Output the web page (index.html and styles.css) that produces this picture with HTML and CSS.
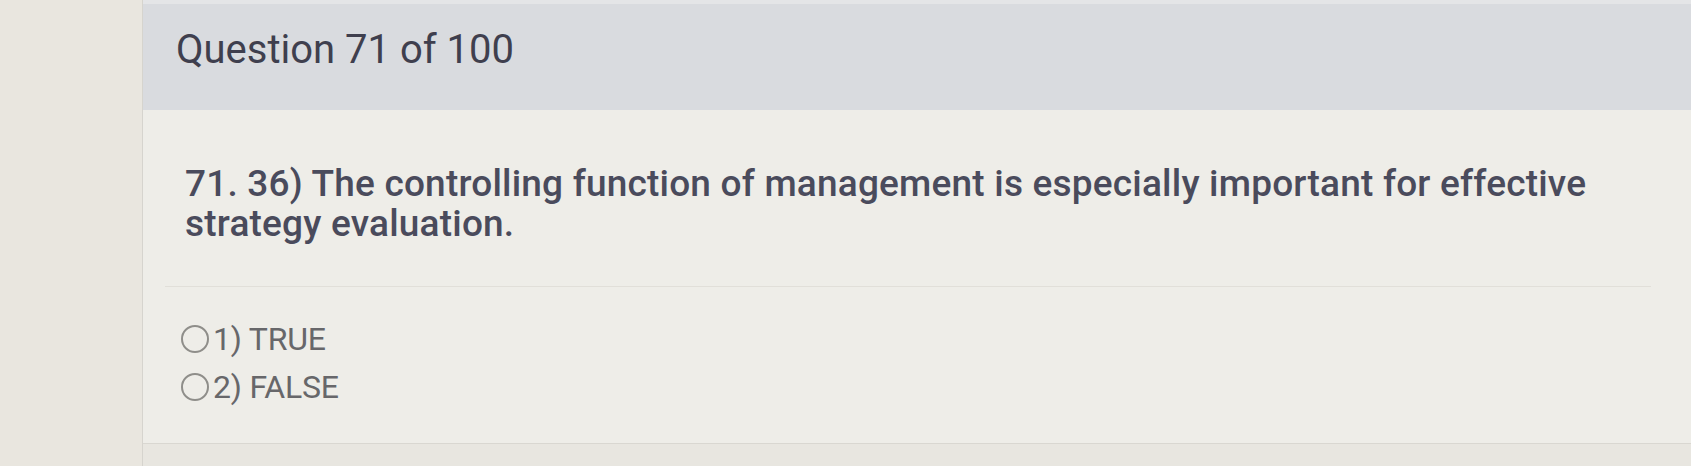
FILE: index.html
```html
<!DOCTYPE html>
<html lang="en">
<head>
<meta charset="utf-8">
<title>Question 71 of 100</title>
<link rel="stylesheet" href="styles.css">
</head>
<body>
<div class="page">
  <div class="gutter"></div>
  <main class="main">
    <header class="qhead">
      <h1 class="qtitle">Question 71 of 100</h1>
    </header>
    <section class="card">
      <p class="qtext">71. 36) The controlling function of management is especially important for effective strategy evaluation.</p>
      <hr class="divider">
      <ul class="options">
        <li class="option"><span class="radio"></span><span class="label">1) TRUE</span></li>
        <li class="option"><span class="radio"></span><span class="label">2) FALSE</span></li>
      </ul>
    </section>
  </main>
</div>
</body>
</html>
```

FILE: styles.css
```css
html, body {
  margin: 0;
  padding: 0;
}
body {
  width: 1691px;
  height: 466px;
  overflow: hidden;
  background: #e8e6e0;
  font-family: Roboto, "Liberation Sans", Arial, sans-serif;
}
.page {
  display: flex;
  height: 466px;
}
.gutter {
  width: 142px;
  flex: none;
  background: #e9e6df;
}
.main {
  flex: 1;
  display: flex;
  flex-direction: column;
  border-left: 1px solid #d6d4ce;
}
.qhead {
  height: 110px;
  box-sizing: border-box;
  padding: 22px 0 0 33px;
  background: #d9dbdf;
  border-top: 4px solid #e4e5e7;
}
.qtitle {
  margin: 0;
  font-size: 40px;
  line-height: 48px;
  font-weight: 400;
  color: #3f3f4e;
}
.card {
  height: 334px;
  box-sizing: border-box;
  background: #eeede8;
  border-bottom: 1px solid #d9d7d1;
  padding: 54px 0 0 42px;
}
.qtext {
  margin: 0;
  width: 1480px;
  font-size: 37px;
  line-height: 40px;
  font-weight: 500;
  letter-spacing: 0.2px;
  color: #4a4b5c;
}
.divider {
  margin: 42px 40px 0 -20px;
  border: 0;
  height: 1px;
  background: #e1dfd9;
}
.options {
  list-style: none;
  margin: 28px 0 0 -4px;
  padding: 0;
}
.option {
  display: flex;
  align-items: center;
  height: 48px;
  gap: 4px;
}
.radio {
  width: 24px;
  height: 24px;
  border: 2.5px solid #8f8e8a;
  border-radius: 50%;
  flex: none;
}
.label {
  font-size: 32px;
  color: #67676a;
  letter-spacing: -0.2px;
}
```
